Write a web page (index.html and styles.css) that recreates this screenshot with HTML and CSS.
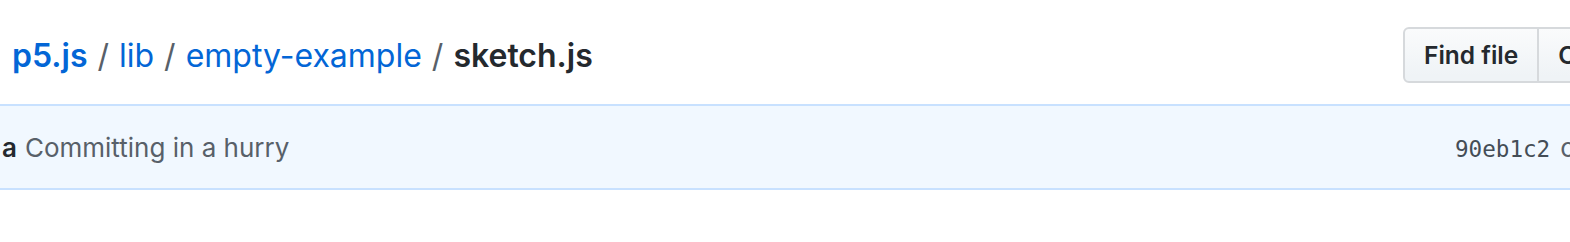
FILE: index.html
```html
<!DOCTYPE html>
<html>
<head>
<meta charset="utf-8">
<link rel="stylesheet" href="styles.css">
</head>
<body>
<div class="page">
  <div class="file-nav">
    <div class="breadcrumb">
      <a class="crumb root" href="#">p5.js</a>
      <span class="sep">/</span>
      <a class="crumb" href="#">lib</a>
      <span class="sep">/</span>
      <a class="crumb" href="#">empty-example</a>
      <span class="sep">/</span>
      <strong class="final">sketch.js</strong>
    </div>
    <div class="btn-group">
      <a class="btn" href="#">Find file</a>
      <a class="btn" href="#">Copy path</a>
    </div>
  </div>
  <div class="commit-tease">
    <div class="commit-left">
      <span class="author">a</span>
      <span class="message">Committing in a hurry</span>
    </div>
    <div class="commit-right">
      <span class="sha">90eb1c2</span>
      <span class="date">on Jan 26, 2019</span>
    </div>
  </div>
</div>
</body>
</html>
```
FILE: styles.css
```css
html, body {
  margin: 0;
  padding: 0;
  background: #fff;
  overflow: hidden;
}
body {
  width: 1570px;
  font-family: Inter, "Noto Sans", "Liberation Sans", sans-serif;
  color: #24292e;
}
.page {
  width: 1900px;
  white-space: nowrap;
}
.file-nav {
  height: 104px;
  display: flex;
  align-items: center;
  box-sizing: border-box;
  padding-left: 12px;
  padding-top: 6px;
}
.breadcrumb {
  flex: 0 0 1391px;
  font-size: 32px;
  line-height: 40px;
  display: flex;
  align-items: baseline;
  gap: 10px;
  margin-top: 1px;
}
.crumb {
  color: #0366d6;
  text-decoration: none;
}
.crumb.root {
  font-weight: 600;
}
.sep {
  color: #586069;
}
.final {
  font-weight: 600;
  color: #24292e;
}
.btn-group {
  display: flex;
}
.btn {
  display: block;
  font-size: 24.5px;
  font-weight: 600;
  line-height: 40px;
  padding: 6px 19px;
  color: #24292e;
  text-decoration: none;
  background: linear-gradient(#fafbfc, #eff3f6 90%);
  border: 2px solid #d6d9dc;
}
.btn:first-child {
  border-radius: 6px 0 0 6px;
}
.btn + .btn {
  margin-left: -2px;
}
.commit-tease {
  height: 86px;
  box-sizing: border-box;
  background: #f1f8ff;
  border-top: 2px solid #c8e1ff;
  border-bottom: 2px solid #c8e1ff;
  display: flex;
  align-items: center;
  padding-left: 2px;
}
.commit-left {
  flex: 0 0 1453px;
  font-size: 26px;
  display: flex;
  gap: 8px;
}
.author {
  font-weight: 600;
  color: #24292e;
}
.message {
  color: #586069;
}
.commit-right {
  font-size: 26px;
  color: #586069;
  display: flex;
  gap: 10px;
  align-items: baseline;
}
.sha {
  font-family: "DejaVu Sans Mono", monospace;
  font-size: 22.6px;
  color: #444d56;
}
```
